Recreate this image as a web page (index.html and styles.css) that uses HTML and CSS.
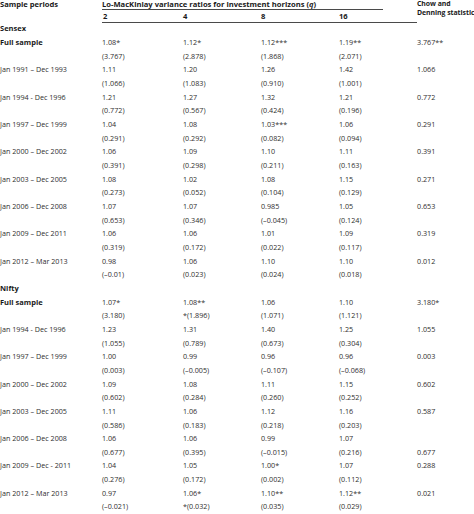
FILE: index.html
```html
<!DOCTYPE html>
<html>
<head>
<meta charset="utf-8">
<link rel="stylesheet" href="styles.css">
</head>
<body>
<table class="vr">
  <colgroup>
    <col class="c-period"><col class="c-q"><col class="c-q2"><col class="c-q2"><col class="c-q2"><col class="c-chow">
  </colgroup>
  <thead>
    <tr class="h1">
      <th rowspan="2" class="hl">Sample periods</th>
      <th colspan="4" class="hgroup"><div class="hgroup-in">Lo-MacKinlay variance ratios for investment horizons (<i>q</i>)</div></th>
      <th rowspan="2" class="hchow">Chow and<br>Denning statistic</th>
    </tr>
    <tr class="h2">
      <th>2</th><th>4</th><th>8</th><th>16</th>
    </tr>
  </thead>
  <tbody>
    <tr class="sec"><td>Sensex</td><td></td><td></td><td></td><td></td><td></td></tr>
    <tr><td class="b">Full sample</td><td>1.08*</td><td>1.12*</td><td>1.12***</td><td>1.19**</td><td>3.767**</td></tr>
    <tr><td></td><td>(3.767)</td><td>(2.878)</td><td>(1.868)</td><td>(2.071)</td><td></td></tr>
    <tr><td>Jan 1991 – Dec 1993</td><td>1.11</td><td>1.20</td><td>1.26</td><td>1.42</td><td>1.066</td></tr>
    <tr><td></td><td>(1.066)</td><td>(1.083)</td><td>(0.910)</td><td>(1.001)</td><td></td></tr>
    <tr><td>Jan 1994 - Dec 1996</td><td>1.21</td><td>1.27</td><td>1.32</td><td>1.21</td><td>0.772</td></tr>
    <tr><td></td><td>(0.772)</td><td>(0.567)</td><td>(0.424)</td><td>(0.196)</td><td></td></tr>
    <tr><td>Jan 1997 – Dec 1999</td><td>1.04</td><td>1.08</td><td>1.03***</td><td>1.06</td><td>0.291</td></tr>
    <tr><td></td><td>(0.291)</td><td>(0.292)</td><td>(0.082)</td><td>(0.094)</td><td></td></tr>
    <tr><td>Jan 2000 – Dec 2002</td><td>1.06</td><td>1.09</td><td>1.10</td><td>1.11</td><td>0.391</td></tr>
    <tr><td></td><td>(0.391)</td><td>(0.298)</td><td>(0.211)</td><td>(0.163)</td><td></td></tr>
    <tr><td>Jan 2003 – Dec 2005</td><td>1.08</td><td>1.02</td><td>1.08</td><td>1.15</td><td>0.271</td></tr>
    <tr><td></td><td>(0.273)</td><td>(0.052)</td><td>(0.104)</td><td>(0.129)</td><td></td></tr>
    <tr><td>Jan 2006 – Dec 2008</td><td>1.07</td><td>1.07</td><td>0.985</td><td>1.05</td><td>0.653</td></tr>
    <tr><td></td><td>(0.653)</td><td>(0.346)</td><td>(–0.045)</td><td>(0.124)</td><td></td></tr>
    <tr><td>Jan 2009 – Dec 2011</td><td>1.06</td><td>1.06</td><td>1.01</td><td>1.09</td><td>0.319</td></tr>
    <tr><td></td><td>(0.319)</td><td>(0.172)</td><td>(0.022)</td><td>(0.117)</td><td></td></tr>
    <tr><td>Jan 2012 – Mar 2013</td><td>0.98</td><td>1.06</td><td>1.10</td><td>1.10</td><td>0.012</td></tr>
    <tr><td></td><td>(–0.01)</td><td>(0.023)</td><td>(0.024)</td><td>(0.018)</td><td></td></tr>
    <tr class="sec"><td>Nifty</td><td></td><td></td><td></td><td></td><td></td></tr>
    <tr><td class="b">Full sample</td><td>1.07*</td><td>1.08**</td><td>1.06</td><td>1.10</td><td>3.180*</td></tr>
    <tr><td></td><td>(3.180)</td><td>*(1.896)</td><td>(1.071)</td><td>(1.121)</td><td></td></tr>
    <tr><td>Jan 1994 - Dec 1996</td><td>1.23</td><td>1.31</td><td>1.40</td><td>1.25</td><td>1.055</td></tr>
    <tr><td></td><td>(1.055)</td><td>(0.789)</td><td>(0.673)</td><td>(0.304)</td><td></td></tr>
    <tr><td>Jan 1997 – Dec 1999</td><td>1.00</td><td>0.99</td><td>0.96</td><td>0.96</td><td>0.003</td></tr>
    <tr><td></td><td>(0.003)</td><td>(–0.005)</td><td>(–0.107)</td><td>(–0.068)</td><td></td></tr>
    <tr><td>Jan 2000 – Dec 2002</td><td>1.09</td><td>1.08</td><td>1.11</td><td>1.15</td><td>0.602</td></tr>
    <tr><td></td><td>(0.602)</td><td>(0.284)</td><td>(0.260)</td><td>(0.252)</td><td></td></tr>
    <tr><td>Jan 2003 – Dec 2005</td><td>1.11</td><td>1.06</td><td>1.12</td><td>1.16</td><td>0.587</td></tr>
    <tr><td></td><td>(0.586)</td><td>(0.183)</td><td>(0.218)</td><td>(0.203)</td><td></td></tr>
    <tr><td>Jan 2006 – Dec 2008</td><td>1.06</td><td>1.06</td><td>0.99</td><td>1.07</td><td></td></tr>
    <tr><td></td><td>(0.677)</td><td>(0.395)</td><td>(–0.015)</td><td>(0.216)</td><td>0.677</td></tr>
    <tr><td>Jan 2009 – Dec - 2011</td><td>1.04</td><td>1.05</td><td>1.00*</td><td>1.07</td><td>0.288</td></tr>
    <tr><td></td><td>(0.276)</td><td>(0.172)</td><td>(0.002)</td><td>(0.112)</td><td></td></tr>
    <tr><td>Jan 2012 – Mar 2013</td><td>0.97</td><td>1.06*</td><td>1.10**</td><td>1.12**</td><td>0.021</td></tr>
    <tr><td></td><td>(–0.021)</td><td>*(0.032)</td><td>(0.035)</td><td>(0.029)</td><td></td></tr>
  </tbody>
</table>
</body>
</html>
```

FILE: styles.css
```css
html, body {
  margin: 0;
  padding: 0;
  background: #ffffff;
}

.vr {
  width: 474px;
  table-layout: fixed;
  border-collapse: collapse;
  border-spacing: 0;
  font-family: "Open Sans", "Liberation Sans", sans-serif;
  font-size: 7.2px;
  color: #2f2f2f;
}

.c-period { width: 102px; }
.c-q { width: 81px; }
.c-q2 { width: 78px; }
.c-chow { width: 57px; }

.vr th,
.vr td {
  padding: 0;
  text-align: left;
  vertical-align: middle;
  white-space: nowrap;
}

.vr th {
  font-weight: 700;
  color: #1a1a1a;
  font-size: 7.6px;
  line-height: 8.5px;
}

.h1 th {
  height: 9.5px;
  vertical-align: top;
}

.hgroup-in {
  border-bottom: 1px solid #4a4a4a;
  margin-right: 34px;
  height: 8.5px;
}

.hgroup-in i {
  font-style: italic;
}

.h2 th {
  height: 11px;
  border-bottom: 1px solid #4a4a4a;
  padding-top: 1px;
  vertical-align: middle;
}

.h2 th:first-child {
  padding-left: 1px;
}

.vr th.hchow {
  vertical-align: top;
  font-size: 6.9px;
  letter-spacing: -0.05px;
}

.vr tbody td {
  height: 13.65px;
  line-height: 13.65px;
}

.sec td:first-child,
.vr td.b {
  font-weight: 700;
  font-size: 7.5px;
  color: #1a1a1a;
}
```
